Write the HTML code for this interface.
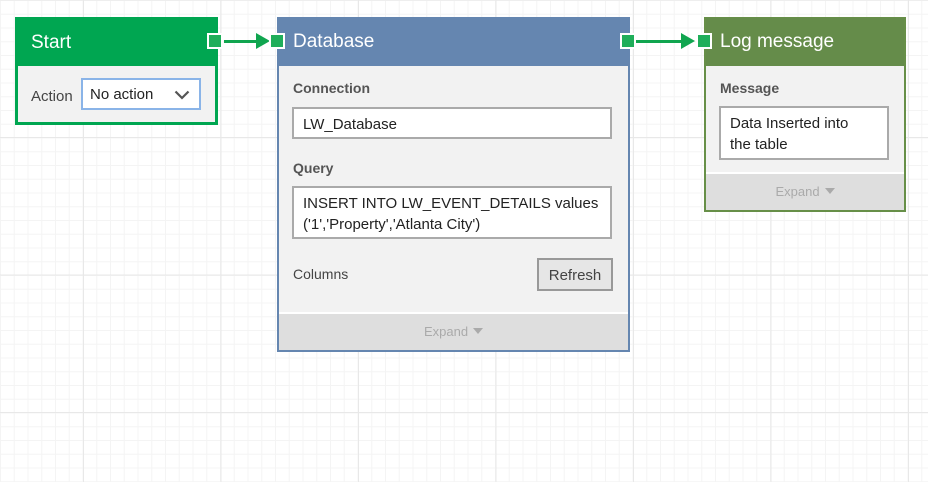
<!DOCTYPE html>
<html><head><style>
*{margin:0;padding:0;box-sizing:border-box}
body{width:928px;height:482px;overflow:hidden;position:relative;font-family:"Liberation Sans",sans-serif;
background-color:#fff;
background-image:linear-gradient(#e8e8e8 1px,transparent 1px),linear-gradient(90deg,#e8e8e8 1px,transparent 1px),linear-gradient(#f4f4f4 1px,transparent 1px),linear-gradient(90deg,#f4f4f4 1px,transparent 1px);
background-size:137.5px 137.5px,137.5px 137.5px,13.75px 13.75px,13.75px 13.75px;
background-position:0 137px,83px 0,0 0,0 0;}
.a{position:absolute}
.box{position:absolute;background:#f2f2f2}
.hd{position:absolute;left:0;right:0;top:0;height:48px;color:#fff;font-size:19px;line-height:48px;padding-left:14px}
.lbl{position:absolute;font-size:14px;font-weight:bold;color:#555}
.inp{position:absolute;background:#fff;border:2px solid #aaa;font-size:15px;color:#222;padding:5px 9px 3px;line-height:21px}
.ft{position:absolute;left:0;right:0;bottom:0;height:38px;background:#dedede;border-top:2px solid #fff;text-align:center;color:#aaa;font-size:13px;line-height:36px}
.tri{display:inline-block;width:0;height:0;border-left:5px solid transparent;border-right:5px solid transparent;border-top:6px solid #aaa;margin-left:5px;vertical-align:2px}
.sq{position:absolute;width:16px;height:16px;background:#1fae5a;border:2px solid #fff}
.ln{position:absolute;height:3px;background:#10a54f}
.ah{position:absolute;width:0;height:0;border-top:8px solid transparent;border-bottom:8px solid transparent;border-left:14px solid #10a54f}
</style></head><body>

<div class="box" style="left:15px;top:17px;width:203px;height:108px;border:3px solid #00a651">
 <div class="hd" style="background:#00a651;top:-1px;height:47px;padding-left:13px">Start</div>
 <div class="a" style="left:13px;top:68px;font-size:15px;color:#444">Action</div>
 <div class="a" style="left:63px;top:58px;width:120px;height:32px;background:#fff;border:2px solid #8ab4e8;font-size:15px;color:#222;padding-left:7px;line-height:30px">No action
  <svg class="a" style="right:9px;top:10px" width="16" height="10" viewBox="0 0 16 10"><path d="M1.5 1.5 L8 8 L14.5 1.5" fill="none" stroke="#555" stroke-width="2.2"/></svg></div>
</div>

<div class="box" style="left:277px;top:17px;width:353px;height:335px;border:2px solid #6586b0">
 <div class="hd" style="background:#6586b0;top:-1px;height:48px;padding-left:14px">Database</div>
 <div class="lbl" style="left:14px;top:61px">Connection</div>
 <div class="inp" style="left:13px;top:88px;width:320px;height:32px">LW_Database</div>
 <div class="lbl" style="left:14px;top:141px">Query</div>
 <div class="inp" style="left:13px;top:167px;width:320px;height:53px">INSERT INTO LW_EVENT_DETAILS values ('1','Property','Atlanta City')</div>
 <div class="a" style="left:14px;top:247px;font-size:14px;color:#444">Columns</div>
 <div class="a" style="left:258px;top:239px;width:76px;height:33px;background:#e6e6e6;border:2px solid #999;font-size:15px;color:#444;text-align:center;line-height:31px">Refresh</div>
 <div class="ft">Expand<span class="tri"></span></div>
</div>

<div class="box" style="left:704px;top:17px;width:202px;height:195px;border:2px solid #678f48">
 <div class="hd" style="background:#658c4a;top:-1px;height:48px;padding-left:14px">Log message</div>
 <div class="lbl" style="left:14px;top:61px">Message</div>
 <div class="inp" style="left:13px;top:87px;width:170px;height:54px;padding-right:30px">Data Inserted into the table</div>
 <div class="ft">Expand<span class="tri"></span></div>
</div>

<div class="sq" style="left:207px;top:33px"></div>
<div class="ln" style="left:224px;top:40px;width:34px"></div>
<div class="ah" style="left:256px;top:33px"></div>
<div class="sq" style="left:269px;top:33px"></div>

<div class="sq" style="left:620px;top:33px"></div>
<div class="ln" style="left:636px;top:40px;width:46px"></div>
<div class="ah" style="left:681px;top:33px"></div>
<div class="sq" style="left:696px;top:33px"></div>
</body></html>
